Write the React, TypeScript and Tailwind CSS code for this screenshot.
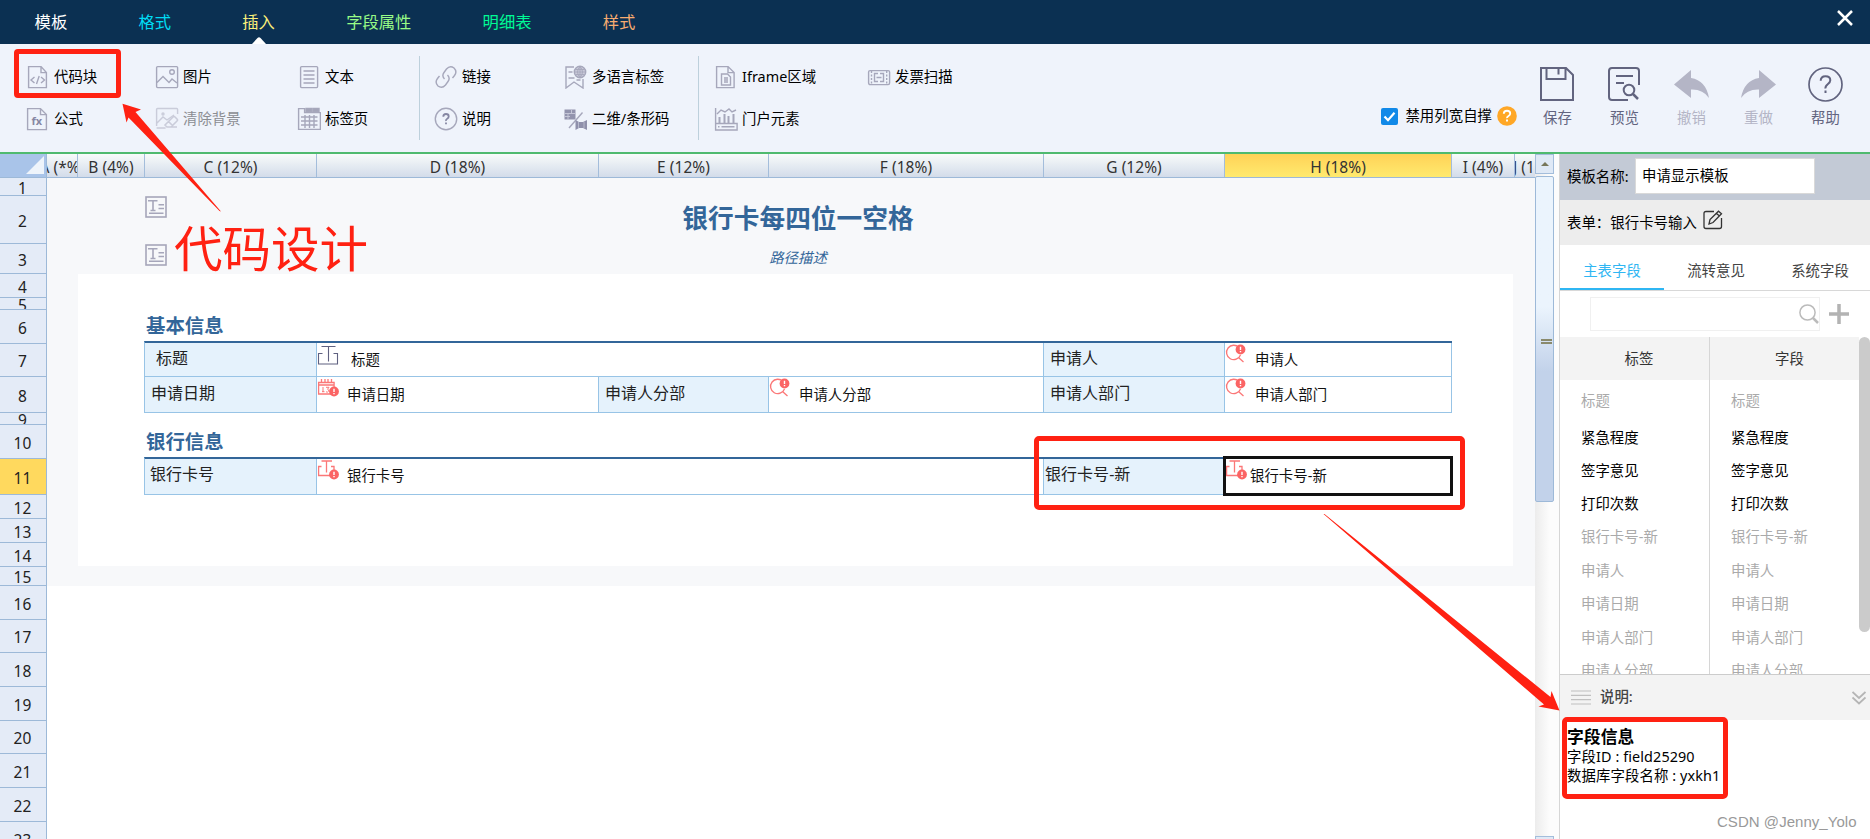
import React from "react";

const cjk = "font-['Noto_Sans','Noto_Sans_CJK_SC',sans-serif]";

type Kids = { children?: React.ReactNode };

function Glyph({ children, w = 24, h = 24 }: Kids & { w?: number; h?: number }) {
  return (
    <svg width={w} height={h} viewBox={`0 0 ${w} ${h}`} fill="none" stroke="#a6a7bb" strokeWidth="1.4" className="shrink-0">
      {children}
    </svg>
  );
}

const CodeIcon = () => (
  <Glyph>
    <path d="M2.600 1.600h12.500l5.300 6v15H2.600zM15 1.600v6h5.400" />
    <path d="M8.500 12l-3.500 3 3.500 3M15 12l3.500 3-3.500 3M13.200 11l-2.700 8" />
  </Glyph>
);
const FxIcon = () => (
  <Glyph>
    <path d="M1.600 1.600H14.500l5.900 6v15H1.600zM14.500 1.600v6h5.900" />
    <text x="5.500" y="18" fontSize="11" fontWeight="700" fill="#8687a3" stroke="none" fontFamily="Noto Sans">fx</text>
  </Glyph>
);
const ImageIcon = () => (
  <Glyph>
    <rect x="1.600" y="1.600" width="21" height="21" rx="1" />
    <path d="M2 17.500l6-6 6 6 3-3.500 5 4" />
    <circle cx="17" cy="7" r="2.300" />
  </Glyph>
);
const ClearIcon = () => (
  <Glyph>
    <g opacity=".5">
      <path d="M1.600 19V2.500q0-1 1-1h19q1 0 1 1V7M1.600 21h9M2 16l6-6 4 3 7-5" />
      <circle cx="8" cy="7" r="1" />
      <path d="M10 18l8-8q1-1 2 0l2 2q1 1 0 2l-6 6h-4zM13 14l5 5M16 20h6" strokeWidth="1.600" />
    </g>
  </Glyph>
);
const TextIcon = () => (
  <Glyph>
    <rect x="3.600" y="1.600" width="17" height="21" rx="1" />
    <path d="M6.500 6h11M6.500 10h11M6.500 14h11M6.500 18h11" />
  </Glyph>
);
const TabPageIcon = () => (
  <Glyph>
    <path d="M1.600 22.400V1.600h6v4h15.800v16.800z" />
    <path d="M9 1.500h5.500v3H9zM16 1.500h6v3h-6z" fill="#a3a4b9" />
    <path d="M4 10h16.500M4 14h16.500M4 18h16.500M8 8v13M12.500 8v13M17 8v13" />
  </Glyph>
);
const LinkIcon = () => (
  <Glyph>
    <path d="M18.500 13l2-2.500q3-4-.5-7.500-4-3-7.500 1L10 7.500q-2.500 3.500.5 6.500" />
    <path d="M5.500 11l-2 2.500q-3 4 .5 7.500 4 3 7.500-1l2.500-3.500q2.500-3.500-.5-6.500" />
  </Glyph>
);
const HelpSmall = () => (
  <Glyph>
    <circle cx="12" cy="12" r="10.700" />
    <path d="M9.300 9.800q0-2.800 2.700-2.800t2.700 2.400q0 1.500-1.500 2.300T12 14M12 15.500v1.700" stroke="#8687a3" strokeWidth="1.800" />
  </Glyph>
);
const LangIcon = () => (
  <Glyph>
    <path d="M10 2H2v21l8-6 9 6V14M4.500 7h4M4.500 13h6M12.500 15h4" />
    <circle cx="16" cy="7" r="5.700" fill="#c9c9d9" />
    <path d="M10.500 7h11M16 1.500v11M11.500 4.500h9M11.500 9.500h9M16 1.500q-5 5.500 0 11M16 1.500q5 5.500 0 11" strokeWidth=".9" />
  </Glyph>
);
const CodeBarIcon = () => (
  <Glyph>
    <path d="M.5 2.500h11v10H.5z" fill="#9293ad" stroke="none" />
    <path d="M1 6.500h10M1 9.500h5M7.500 3v3M4 7v5" stroke="#c9cbda" strokeWidth=".9" />
    <path d="M18.500 5.500L5 21" />
    <path d="M11.500 13l3.500 2h4l4-2v10l-4-2h-4l-3.500 2z" fill="#8f90ab" stroke="none" />
    <path d="M14.500 15v6M20 15v6" stroke="#c9cbda" strokeWidth=".7" />
  </Glyph>
);
const FrameIcon = () => (
  <Glyph>
    <path d="M2.600 1.600h11.500l6 6v15H2.600zM14 1.600v6h6" />
    <path d="M7.500 9h6l3 3v8h-9zM10 13h4M10 15h4M10 17h4" />
  </Glyph>
);
const PortalIcon = () => (
  <Glyph>
    <path d="M1.600 1v22h21.500v-6.500H1.600M3 7l4-4 4 2 4-3 3 3 4-2" />
    <path d="M5.500 10v6M10.500 7v9M14.500 9v7M19.500 7v9" strokeWidth="2" />
    <path d="M4 19.700h1.500M7.500 19.700h13" />
  </Glyph>
);
const InvoiceIcon = () => (
  <Glyph>
    <rect x="1.600" y="5.600" width="21" height="14" rx="1.500" />
    <path d="M4.500 6v13M19.700 6v13" strokeDasharray="2 1.500" />
    <path d="M11 8.500H7.500v8H11M13 8.500h3.500v8H13M9.500 12.500h5" />
  </Glyph>
);

function Tool({ icon, label, muted }: { icon: React.ReactNode; label: string; muted?: boolean }) {
  return (
    <div className="flex h-[42px] items-center gap-1">
      {icon}
      <span className={muted ? "text-[#8b8d92]" : "text-black"}>{label}</span>
    </div>
  );
}

function Action({ icon, label, muted }: { icon: React.ReactNode; label: string; muted?: boolean }) {
  return (
    <div className="flex w-[67px] flex-col items-center">
      <div className="flex h-9 items-center">{icon}</div>
      <span className={muted ? "mt-[6px] leading-5 text-[#b4b5c6]" : "mt-[6px] leading-5 text-[#62647f]"}>{label}</span>
    </div>
  );
}

const tabs = [
  { t: "模板", c: "text-white" },
  { t: "格式", c: "text-[#00dcf5]" },
  { t: "插入", c: "text-[#fdf07a]" },
  { t: "字段属性", c: "text-[#98fb86]" },
  { t: "明细表", c: "text-[#00fa95]" },
  { t: "样式", c: "text-[#f8ac70]" },
];

const colW = "border-r border-[#a3bddb] bg-gradient-to-b from-[#f8fbfa] to-[#d3dcea]";
const columns = [
  { t: "A (*%)", c: `w-[31px] ${colW}` },
  { t: "B (4%)", c: `w-[67px] ${colW}` },
  { t: "C (12%)", c: `w-[172px] ${colW}` },
  { t: "D (18%)", c: `w-[282px] ${colW}` },
  { t: "E (12%)", c: `w-[170px] ${colW}` },
  { t: "F (18%)", c: `w-[275px] ${colW}` },
  { t: "G (12%)", c: `w-[181px] ${colW}` },
  { t: "H (18%)", c: "w-[227px] border-r border-[#a3bddb] bg-gradient-to-b from-[#ffd257] to-[#ffea6e]" },
  { t: "I (4%)", c: `w-[63px] ${colW}` },
];

const rowHeights = [18, 48, 30, 24, 12, 34, 33, 36, 12, 34, 36, 24, 24, 24, 19, 34, 33, 34, 34, 33, 34, 34, 34];

const TitleIcon = () => (
  <svg width="22" height="22" viewBox="0 0 22 22" fill="none" stroke="#a6a6ba" strokeWidth="1.600">
    <rect x="1" y="1" width="20" height="20" />
    <path d="M3 4.700h9.500M8 5v9.500M5.500 14.500h5M13.500 8.700h5.500M13.500 12.500h5.500M4 17.300h14.500" />
  </svg>
);
const Alert = ({ x, y }: { x: number; y: number }) => (
  <g stroke="none">
    <circle cx={x} cy={y} r="4.900" fill="#fb6464" />
    <path d={`M${x - 0.7} ${y - 2.8}h1.400v3.400h-1.400zM${x - 0.7} ${y + 1.4}h1.400v1.300h-1.400z`} fill="#fff" />
  </g>
);
const TField = () => (
  <svg width="24" height="24" viewBox="0 0 24 24" fill="none" stroke="#5f6180" strokeWidth="1.100" className="mt-px">
    <path d="M4.500 2.500h14M11.500 2.500v15M5.500 9.500h-4v10.500h19V9.500h-4" />
  </svg>
);
const TAlert = () => (
  <svg width="24" height="24" viewBox="0 0 24 24" fill="none" stroke="#fb7777" strokeWidth="1.300">
    <path d="M4.500 2h10.500M9.500 2v11.500M4.500 7.500H1.600v9H13M14 7.500h3V11" />
    <Alert x={17} y={15.500} />
  </svg>
);
const DateAlert = () => (
  <svg width="24" height="24" viewBox="0 0 24 24" fill="none" stroke="#fb7777" strokeWidth="1.300" className="mt-px">
    <path d="M1.600 4.500h15.500v11.500H1.600zM1.600 7h15.500M4.500 1v3.500M8 1v3.500M11 1v3.500M14.500 1v3.500" />
    <path d="M6 9v5M5 13.700h2.500M9 9.300h3l-1.500 2q2 .5 1 2t-2.500.500" strokeWidth="1" />
    <Alert x={17} y={13.500} />
  </svg>
);
const SearchAlert = () => (
  <svg width="24" height="24" viewBox="0 0 24 24" fill="none" stroke="#fb7777" strokeWidth="1.300" className="mt-px">
    <path d="M14 3.500A7.200 7.200 0 1 0 15.500 11M13.500 13.500l5 4.500" />
    <Alert x={15.500} y={5.500} />
  </svg>
);

const lb = "border-[#98c4e6] border-r border-b bg-[#e5f2fc]";
const vb = "border-[#98c4e6] border-r border-b bg-white";

function Label({ cls, children }: Kids & { cls: string }) {
  return <div className={`flex shrink-0 items-start text-[16px] leading-6 text-[#222] ${lb} ${cls}`}>{children}</div>;
}
function Value({ cls, pad, icon, children }: Kids & { cls: string; pad: string; icon: React.ReactNode }) {
  return (
    <div className={`flex shrink-0 items-start text-[14.4px] leading-6 text-[#111] ${vb} ${cls}`}>
      {icon}
      <span className={pad}>{children}</span>
    </div>
  );
}

const fields = [
  { t: "标题", c: "h-[42px] text-[#aaa]" },
  { t: "紧急程度", c: "h-[32px] text-black" },
  { t: "签字意见", c: "h-[33px] text-black" },
  { t: "打印次数", c: "h-[33px] text-black" },
  { t: "银行卡号-新", c: "h-[34px] text-[#aaa]" },
  { t: "申请人", c: "h-[33px] text-[#aaa]" },
  { t: "申请日期", c: "h-[34px] text-[#aaa]" },
  { t: "申请人部门", c: "h-[33px] text-[#aaa]" },
  { t: "申请人分部", c: "h-[33px] text-[#aaa]" },
];

function FieldList({ cls }: { cls: string }) {
  return (
    <div className={`shrink-0 pl-[21px] ${cls}`}>
      {fields.map((f) => (
        <div key={f.t} className={`flex items-center ${f.c}`}>{f.t}</div>
      ))}
    </div>
  );
}

export default function App() {
  return (
    <div className={`relative flex h-[839px] w-[1870px] flex-col overflow-hidden bg-white text-[14.4px] leading-6 tracking-[0.04px] ${cjk}`}>
      <header className="flex h-11 shrink-0 justify-between bg-[#0b3052]">
        <nav className="-ml-px flex text-[16.3px]">
          {tabs.map((t) => (
            <div key={t.t} className={`relative flex items-center px-[35.600px] ${t.c}`}>
              {t.t}
              {t.t === "插入" && (
                <svg width="14" height="7" viewBox="0 0 14 7" className="absolute bottom-0 left-1/2 -translate-x-1/2">
                  <path d="M0 7L5.500 1Q7-.5 8.500 1L14 7z" fill="#fff" />
                </svg>
              )}
            </div>
          ))}
        </nav>
        <svg width="16" height="16" viewBox="0 0 16 16" className="mr-[17px] mt-[10px]" stroke="#fff" strokeWidth="2.500">
          <path d="M1 1l14 14M15 1L1 15" />
        </svg>
      </header>

      <section className="flex h-[110px] shrink-0 justify-between border-b-2 border-[#4fba6f] bg-[#eff3fb]">
        <div className="flex pt-3">
          <div className="w-[129px] pl-[26px]">
            <Tool icon={<CodeIcon />} label="代码块" />
            <Tool icon={<FxIcon />} label="公式" />
          </div>
          <div className="w-[142px] pl-[26px]">
            <Tool icon={<ImageIcon />} label="图片" />
            <Tool icon={<ClearIcon />} label="清除背景" muted />
          </div>
          <div className="h-[84px] w-[149px] border-r border-[#bdd0dc] pl-[26px]">
            <Tool icon={<TextIcon />} label="文本" />
            <Tool icon={<TabPageIcon />} label="标签页" />
          </div>
          <div className="w-[130px] pl-[14px]">
            <Tool icon={<LinkIcon />} label="链接" />
            <Tool icon={<HelpSmall />} label="说明" />
          </div>
          <div className="h-[84px] w-[149px] border-r border-[#bdd0dc] pl-[14px]">
            <Tool icon={<LangIcon />} label="多语言标签" />
            <Tool icon={<CodeBarIcon />} label="二维/条形码" />
          </div>
          <div className="w-[153px] pl-[15px]">
            <Tool icon={<FrameIcon />} label="Iframe区域" />
            <Tool icon={<PortalIcon />} label="门户元素" />
          </div>
          <div className="pl-[15px]">
            <Tool icon={<InvoiceIcon />} label="发票扫描" />
          </div>
        </div>
        <div className="flex pr-[11px]">
          <div className="mt-[60px] flex h-6 items-center">
            <svg width="17" height="17" viewBox="0 0 17 17">
              <rect width="17" height="17" rx="2" fill="#1189e8" />
              <path d="M3.500 8.500l3.500 3.700 6.500-7.400" fill="none" stroke="#fff" strokeWidth="2.200" />
            </svg>
            <span className="ml-[7px] text-black">禁用列宽自撑</span>
            <svg width="20" height="20" viewBox="0 0 20 20" className="ml-[5px]">
              <circle cx="10" cy="10" r="9.800" fill="#ffa726" />
              <path d="M6.800 7.700Q6.800 4.800 10 4.800t3.200 2.700q0 1.500-1.700 2.500T10 12.200M10 13.600v2" fill="none" stroke="#fff" strokeWidth="1.900" />
            </svg>
          </div>
          <div className="ml-[7px] flex pt-[22px]">
            <Action
              label="保存"
              icon={
                <svg width="34" height="34" viewBox="0 0 34 34" fill="none" stroke="#62647f" strokeWidth="2" className="mr-px">
                  <path d="M1 1h25l7 7v25H1zM6.500 1v11h19V1M18.500 1v6.500" />
                </svg>
              }
            />
            <Action
              label="预览"
              icon={
                <svg width="34" height="34" viewBox="0 0 34 34" fill="none" stroke="#62647f" strokeWidth="2" className="mr-[2px]">
                  <path d="M32 18V4q0-3-3-3H5Q2 1 2 4v26q0 3 3 3h16M9 9h17M9 16h8" />
                  <circle cx="22" cy="23" r="5.300" />
                  <path d="M26 27l5 5" strokeWidth="2.500" />
                </svg>
              }
            />
            <Action
              muted
              label="撤销"
              icon={
                <svg width="35" height="29" viewBox="0 0 35 29" fill="#b4b5c6">
                  <path d="M0 14.500L17 0v8q15 2.500 18 20-6-9-18-8.500V28z" />
                </svg>
              }
            />
            <Action
              muted
              label="重做"
              icon={
                <svg width="35" height="29" viewBox="0 0 35 29" fill="#b4b5c6">
                  <path d="M35 14.500L18 0v8Q3 10.500 0 28q6-9 18-8.500V28z" />
                </svg>
              }
            />
            <Action
              label="帮助"
              icon={
                <svg width="35" height="35" viewBox="0 0 35 35" fill="none" stroke="#62647f" strokeWidth="1.700">
                  <circle cx="17.500" cy="17.500" r="16.500" />
                  <path d="M12.700 13.800q0-4.600 4.800-4.600t4.800 4q0 2-2.600 4t-2.200 4.300M17.500 23.500v2.500" strokeWidth="2" />
                </svg>
              }
            />
          </div>
        </div>
      </section>

      <main className="flex h-[685px] shrink-0">
        <div className="w-[47px] shrink-0 overflow-hidden border-r border-[#9db9d8] bg-[#e4ebf7]">
          <div className="flex h-6 items-end justify-end border-b border-[#9db9d8] bg-[#a9c4e9] pb-[3px] pr-[2px]">
            <svg width="18" height="18" viewBox="0 0 18 18"><path d="M18 0v18H0z" fill="#eef4fb" /></svg>
          </div>
          {rowHeights.map((h, i) => (
            <div
              key={i}
              style={{ height: h }}
              className={`flex items-center justify-center overflow-hidden border-b border-[#9db9d8] pr-[1px] pt-[2px] text-[15.500px] text-[#222] ${i === 10 ? "bg-[#ffd95e]" : ""}`}
            >
              {i + 1}
            </div>
          ))}
        </div>

        <div className="flex w-[1488px] shrink-0 flex-col">
          <div className="flex h-6 shrink-0 overflow-hidden border-b border-[#9db9d8] text-[15.500px] text-[#333]">
            {columns.map((c) => (
              <div key={c.t} className={`flex shrink-0 items-center justify-center overflow-hidden whitespace-nowrap pt-[2px] ${c.c}`}>
                {c.t}
              </div>
            ))}
            <div className="flex w-5 items-center overflow-hidden whitespace-nowrap bg-gradient-to-b from-[#f8fbfa] to-[#d3dcea] pt-[2px]">
              <span className="-ml-[2px]">J (1%)</span>
            </div>
          </div>

          <div className="h-[408px] shrink-0 bg-[#f7f8fa]">
            <div className="flex h-24 pl-[98px]">
              <div className="w-[171px] pt-[18px]">
                <TitleIcon />
                <div className="h-[26px]" />
                <TitleIcon />
              </div>
              <div className="flex w-[964px] flex-col items-center pt-[25px] text-[#336699]">
                <div className="text-[25.700px] font-bold leading-8">银行卡每四位一空格</div>
                <div className="mt-[11px] italic">路径描述</div>
              </div>
            </div>
            <div className="ml-[31px] h-[292px] w-[1435px] bg-white pl-[66px] pt-[40px]">
              <div className="h-[27px] pl-[2px] text-[19.400px] font-semibold leading-6 text-[#336699]">基本信息</div>
              <div className="w-[1308px] border-l border-t-2 border-[#336699] border-l-[#98c4e6]">
                <div className="flex h-[34px]">
                  <Label cls="w-[172px] pl-[11px] pt-[3px]">标题</Label>
                  <Value cls="w-[727px]" pad="ml-[10px] pt-[5px]" icon={<TField />}>标题</Value>
                  <Label cls="w-[181px] pl-[6px] pt-[3px]">申请人</Label>
                  <Value cls="w-[227px]" pad="ml-[6px] pt-[5px]" icon={<SearchAlert />}>申请人</Value>
                </div>
                <div className="flex h-9">
                  <Label cls="w-[172px] pl-[6px] pt-[4px]">申请日期</Label>
                  <Value cls="w-[282px]" pad="ml-[6px] pt-[6px]" icon={<DateAlert />}>申请日期</Value>
                  <Label cls="w-[170px] pl-[6px] pt-[4px]">申请人分部</Label>
                  <Value cls="w-[275px]" pad="ml-[6px] pt-[6px]" icon={<SearchAlert />}>申请人分部</Value>
                  <Label cls="w-[181px] pl-[6px] pt-[4px]">申请人部门</Label>
                  <Value cls="w-[227px]" pad="ml-[6px] pt-[6px]" icon={<SearchAlert />}>申请人部门</Value>
                </div>
              </div>
              <div className="mt-[17px] h-[27px] pl-[2px] text-[19.400px] font-semibold leading-6 text-[#336699]">银行信息</div>
              <div className="flex h-[38px] w-[1308px] border-l border-t-2 border-[#336699] border-l-[#98c4e6]">
                <Label cls="w-[172px] pl-[5px] pt-[3px]">银行卡号</Label>
                <Value cls="w-[727px]" pad="ml-[6px] pt-[5px]" icon={<TAlert />}>银行卡号</Value>
                <Label cls="w-[181px] pl-[1px] pt-[3px]">银行卡号-新</Label>
                <div className="relative flex w-[227px] bg-white">
                  <div className="absolute -left-[2px] -top-[3px] h-[40px] w-[230px] border-[3px] border-[#111]" />
                  <TAlert />
                  <span className="ml-px pt-[5px] text-[#111]">银行卡号-新</span>
                </div>
              </div>
            </div>
          </div>
        </div>

        <div className="flex w-6 shrink-0 flex-col bg-gradient-to-r from-[#ececec] to-[#fcfcfc] to-60%">
          <div className="flex h-[20px] w-[19px] items-center justify-center border border-[#a3bddb] bg-[#dfe9f6]">
            <svg width="8" height="4" viewBox="0 0 8 4"><path d="M4 0l4 4H0z" fill="#77775a" /></svg>
          </div>
          <div className="mt-[2px] flex h-[326px] w-[19px] flex-col items-center rounded-[2px] border border-[#9db9d8] bg-gradient-to-b from-[#ebf4fd] from-40% to-[#c2d2ea] to-60%">
            <div className="ml-[3px] mt-[162px] h-[5px] w-[11px] border-y-2 border-[#8a8a6c]" />
          </div>
          <div className="mt-auto h-[3px] w-[19px] border border-b-0 border-[#a3bddb] bg-[#dfe9f6]" />
        </div>

        <aside className="flex w-[311px] shrink-0 flex-col border-l border-[#d6d6d6]">
          <div className="flex h-[46px] shrink-0 items-center bg-[#c3cad6] pl-[7px] text-black">
            <span className="w-[68px] whitespace-nowrap">模板名称:</span>
            <div className="mt-[-2px] flex h-9 w-[180px] items-center border border-[#d9d9d9] bg-white pl-[6px]">申请显示模板</div>
          </div>
          <div className="flex h-[45px] shrink-0 items-center bg-[#ededed] pl-[7px] text-black">
            <span>表单：银行卡号输入</span>
            <svg width="20" height="20" viewBox="0 0 20 20" fill="none" stroke="#333" strokeWidth="1.300" className="mb-[5px] ml-[6px]">
              <path d="M11 1.500H3Q1 1.500 1 3.500v13q0 2 2 2h13.500q2 0 2-2V8" />
              <path d="M6 14l1-4.500L15.500 1.200l3 2.600L10 12.500zM13.500 3.500l3 2.600" />
            </svg>
          </div>
          <div className="flex h-[46px] shrink-0 border-b border-[#d8d8d8] text-[#444]">
            <div className="flex w-[104px] shrink-0 items-center justify-center border-b-2 border-[#2fb6f3] pt-[8px] text-[#2fb6f3]">主表字段</div>
            <div className="flex w-[104px] shrink-0 items-center justify-center pt-[6px]">流转意见</div>
            <div className="flex w-[104px] shrink-0 items-center justify-center pt-[6px]">系统字段</div>
          </div>
          <div className="flex h-[46px] shrink-0 items-center pl-[30px]">
            <div className="flex h-[34px] w-[230px] items-center justify-end border border-[#f0f0f0]">
              <svg width="20" height="20" viewBox="0 0 20 20" fill="none" stroke="#bbb" strokeWidth="1.500">
                <circle cx="8.500" cy="8.500" r="7.600" />
                <path d="M14 14l5 5" strokeWidth="2.500" />
              </svg>
            </div>
            <svg width="20" height="20" viewBox="0 0 20 20" className="ml-[9px]" stroke="#b3b3b3" strokeWidth="3.500"><path d="M10 0v20M0 10h20" /></svg>
          </div>
          <div className="relative flex h-[43px] shrink-0 bg-[#f3f3f3] text-[#333]">
            <div className="flex w-[150px] items-center justify-center border-r border-[#d6d6d6] pl-[9px]">标签</div>
            <div className="flex w-[149px] items-center justify-center pl-[10px]">字段</div>
            <div className="absolute right-0 top-0 z-10 h-[295px] w-[11px] rounded-full bg-[#cbcbcb]" />
            <div className="w-[11px] bg-white" />
          </div>
          <div className="flex h-[294px] shrink-0 overflow-hidden">
            <FieldList cls="w-[150px] border-r border-[#d6d6d6]" />
            <FieldList cls="w-[149px]" />
          </div>
          <div className="flex h-[46px] shrink-0 items-center border-t border-[#ccc] bg-[#f3f3f3] pl-[11px] pr-[4px]">
            <svg width="20" height="15" viewBox="0 0 20 15" stroke="#c0c0c0" strokeWidth="1.200" className="mb-px"><path d="M0 1h20M0 5.300h20M0 9.600h20M0 14h20" /></svg>
            <span className="mb-[2px] ml-[9px] font-medium text-[#444]">说明:</span>
            <svg width="14" height="14" viewBox="0 0 14 14" fill="none" stroke="#b5b5b5" strokeWidth="1.800" className="ml-auto"><path d="M0.500 1L7 7l6.500-6M0.500 6.500L7 12.500l6.500-6" /></svg>
          </div>
          <div className="flex grow flex-col pl-[7px] pt-[7px] text-black">
            <div className="h-5 text-[16.800px] font-bold leading-5">字段信息</div>
            <div className="h-[19px] leading-5 tracking-[0.1px]">字段ID : field25290</div>
            <div className="h-[19px] leading-5 tracking-[0.1px]">数据库字段名称 : yxkh1</div>
            <div className="mt-[25px] whitespace-nowrap pl-[150px] font-['Liberation_Sans','Noto_Sans_CJK_SC',sans-serif] text-[15px] text-[#999]">CSDN @Jenny_Yolo</div>
          </div>
        </aside>
      </main>

      <div className="absolute left-[14px] top-[49px] h-[49px] w-[107px] rounded-[4px] border-[5px] border-[#ff2112]" />
      <div className="absolute left-[1034px] top-[436px] h-[74px] w-[431px] rounded-[5px] border-[5px] border-[#ff2112]" />
      <div className="absolute left-[1562px] top-[717px] h-[82px] w-[166px] rounded-[5px] border-[5px] border-[#ff2112]" />
      <div className="absolute left-[174px] top-[218px] text-[48.500px] leading-[60px] text-[#ff2112]">代码设计</div>
      <svg width="1870" height="839" viewBox="0 0 1870 839" className="pointer-events-none absolute left-0 top-0" fill="#ff2112">
        <path d="M122.500 103.700L141 109.500 135.500 112 221 211.500 219.500 211 128.500 117.500 126.500 122.500z" />
        <path d="M1323.500 514L1324.500 514 1550.500 697 1551.500 691 1559.500 710.500 1538.500 706.500 1544 704.500z" />
      </svg>
    </div>
  );
}
